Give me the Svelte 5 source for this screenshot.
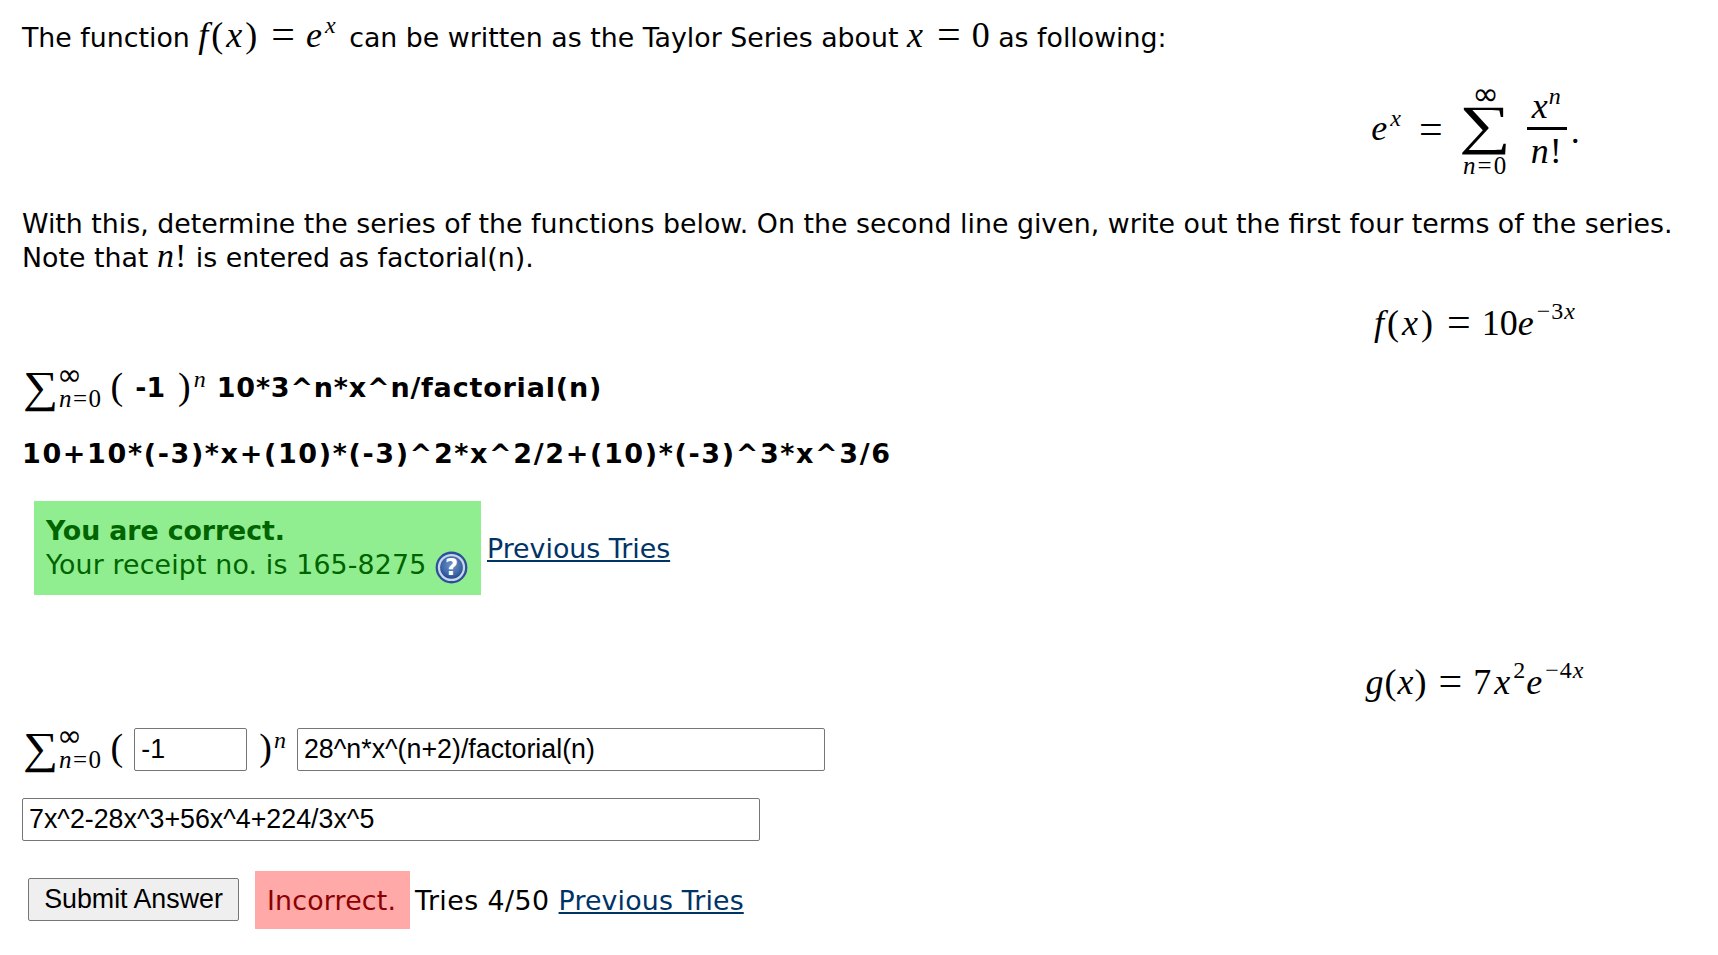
<script>
  let power = $state('-1');
  let expr = $state('28^n*x^(n+2)/factorial(n)');
  let terms = $state('7x^2-28x^3+56x^4+224/3x^5');
</script>

<main class="page">
  <p class="line first">
    The function <span class="math"><i>f</i>(<i>x</i>)<span class="rel">=</span><i>e</i><sup class="endsup"><i>x</i></sup></span> can be written as the Taylor Series about <span class="math"><i>x</i><span class="rel">=</span><span class="num-run">0</span></span> as following:
  </p>

  <div class="display d1">
    <span class="math flexmath">
      <span class="base"><i>e</i><sup><i>x</i></sup></span>
      <span class="rel eq">=</span>
      <span class="bigsum">
        <span class="lim">∞</span>
        <span class="sigma">∑</span>
        <span class="lim low"><i>n</i>=0</span>
      </span>
      <span class="frac">
        <span class="num"><i>x</i><sup><i>n</i></sup></span>
        <span class="den"><i>n</i>!</span>
      </span>
      <span class="dot">.</span>
    </span>
  </div>

  <p class="line second">
    With this, determine the series of the functions below. On the second line given, write out the first four terms of the series.<br />
    Note that <span class="math note"><i>n</i>!</span> is entered as factorial(n).
  </p>

  <div class="display d2">
    <span class="math"><i>f</i>(<i>x</i>)<span class="rel">=</span><span class="num-run">10</span><i>e</i><sup>−3<i>x</i></sup></span>
  </div>

  <div class="sumrow answered">
    <span class="sum"><span class="s">∑</span><span class="stack"><span class="up">∞</span><span class="dn"><i>n</i>=0</span></span></span>
    <span class="paren">(</span>
    <b class="val">-1</b>
    <span class="paren cl">)</span><span class="math supn"><i>n</i></span>
    <b class="val v2">10*3^n*x^n/factorial(n)</b>
  </div>

  <p class="boldline"><b>10+10*(-3)*x+(10)*(-3)^2*x^2/2+(10)*(-3)^3*x^3/6</b></p>

  <div class="status">
    <div class="correct">
      <b>You are correct.</b><br />
      <span class="receipt">Your receipt no. is 165-8275</span>
      <svg class="help" viewBox="0 0 32 32" aria-hidden="true">
        <defs>
          <radialGradient id="hg" cx="50%" cy="40%" r="60%">
            <stop offset="0" stop-color="#6f93c9" />
            <stop offset="0.7" stop-color="#3f68a8" />
            <stop offset="1" stop-color="#23468c" />
          </radialGradient>
        </defs>
        <circle cx="16" cy="16" r="15.4" fill="#2c4f97" />
        <circle cx="16" cy="16" r="13.2" fill="#c7d6ec" />
        <circle cx="16" cy="16" r="11" fill="url(#hg)" />
        <text x="16" y="23.5" text-anchor="middle" class="q">?</text>
      </svg>
    </div>
    <a href="#tries" class="link tries">Previous Tries</a>
  </div>

  <div class="display d3">
    <span class="math"><span class="tight"><i>g</i>(<i>x</i>)</span><span class="rel">=</span>7<i>x</i><sup>2</sup><i>e</i><sup>−4<i>x</i></sup></span>
  </div>

  <div class="sumrow inputs">
    <span class="sum"><span class="s">∑</span><span class="stack"><span class="up">∞</span><span class="dn"><i>n</i>=0</span></span></span>
    <span class="paren">(</span>
    <input class="field small" bind:value={power} />
    <span class="paren cl2">)</span><span class="math supn sn2"><i>n</i></span>
    <input class="field wide" bind:value={expr} />
  </div>

  <input class="field full" bind:value={terms} />

  <div class="submit">
    <button class="btn" type="button">Submit Answer</button>
    <span class="incorrect">Incorrect.</span>
    <span class="tries-count">Tries 4/50</span>
    <a href="#tries" class="link last">Previous Tries</a>
  </div>
</main>

<style>
  :global(body) {
    margin: 0;
    background: #fff;
    color: #000;
    font-family: "DejaVu Sans", Verdana, sans-serif;
  }
  .page {
    width: 1718px;
    height: 955px;
    overflow: hidden;
    box-sizing: border-box;
    padding: 21px 0 0 22px;
    font-size: 26.8px;
    line-height: 34px;
  }
  .line { margin: 0; }
  .math {
    font-family: "Liberation Serif", "Times New Roman", serif;
    font-size: 36px;
    letter-spacing: 3px;
    line-height: 0;
    white-space: nowrap;
  }
  .math sup {
    font-size: 24px;
    line-height: 0;
    vertical-align: 14px;
    letter-spacing: 1px;
  }
  .endsup { margin-right: 4px; }
  .note { font-size: 34px; letter-spacing: 1px; }
  .num-run { letter-spacing: 0; }
  .tight { letter-spacing: 1px; }
  .rel {
    font-size: 42px;
    letter-spacing: 0;
    margin: 0 11px;
    vertical-align: -1px;
  }
  .display {
    display: flex;
    justify-content: center;
    margin-left: 1210px;
    height: 40px;
    align-items: center;
  }
  .d2 .math sup, .d3 .math sup { vertical-align: 16px; }
  .flexmath { display: inline-flex; align-items: center; line-height: normal; }
  .d1 { height: 90px; margin-top: 31px; }
  .d1 .base { margin: -6px 17px 0 4px; }
  .d1 .rel.eq { margin: -4px 20px 0 0; }
  .bigsum {
    display: inline-flex;
    flex-direction: column;
    align-items: center;
    width: 46px;
    margin-right: 18px;
    letter-spacing: 0;
  }
  .lim { font-size: 24px; line-height: 16px; }
  .lim:first-child { font-family: "DejaVu Sans", sans-serif; font-size: 32px; }
  .sigma { font-size: 54px; line-height: 46px; display: inline-block; transform: scaleX(1.35); }
  .bigsum .low { line-height: 20px; margin-top: 8px; letter-spacing: 2px; font-size: 25px; }
  .frac {
    display: inline-flex;
    flex-direction: column;
    align-items: center;
    width: 40px;
    letter-spacing: 1px;
    margin-top: -3px;
  }
  .num { border-bottom: 3px solid #000; width: 100%; text-align: center; line-height: 36px; padding-bottom: 3px; }
  .den { line-height: 42px; }
  .dot { margin-left: 4px; line-height: 24px; }
  .second { margin-top: 31px; }
  .d2 { margin-top: 22px; }
  .sumrow {
    display: flex;
    align-items: center;
    height: 42px;
    white-space: nowrap;
  }
  .answered { margin-top: 30px; }
  .sum { display: inline-flex; align-items: center; font-family: "Liberation Serif", serif; margin-left: 1px; }
  .s { font-size: 44px; line-height: 42px; width: 36px; display: inline-block; transform: scaleX(1.12); transform-origin: left center; }
  .stack { display: inline-flex; flex-direction: column; }
  .up { font: 30px/17px "DejaVu Sans", sans-serif; margin-top: -2px; margin-left: -2px; }
  .dn { font-size: 25px; line-height: 20px; letter-spacing: 1.5px; margin-top: 6px; }
  .paren {
    font-family: "Liberation Serif", serif;
    font-size: 38px;
    font-weight: 400;
    margin-left: 8px;
    margin-top: -4px;
    line-height: 42px;
  }
  .cl { margin-left: 13px; }
  .cl2 { margin-left: 12px; }
  .supn { font-size: 24px; margin: -18px 0 0 3px; letter-spacing: 0; }
  .sn2 { margin-left: 2px; }
  .val { margin-left: 12px; }
  .v2 { margin-left: 11px; letter-spacing: 0.8px; font-size: 27px; }
  .boldline { margin: 28px 0 0; font-size: 27px; letter-spacing: 1.63px; }
  .status {
    display: flex;
    align-items: flex-start;
    margin: 30px 0 0 12px;
  }
  .correct {
    background: #90ee90;
    color: #006400;
    box-sizing: border-box;
    width: 447px;
    height: 94px;
    padding: 13px 12px 0;
    white-space: nowrap;
  }
  .correct b { letter-spacing: -0.1px; }
  .receipt { letter-spacing: 0.15px; }
  .help { width: 33px; height: 33px; vertical-align: -10px; }
  .q { font: 700 22px "DejaVu Sans", sans-serif; fill: #fff; }
  .link { color: #003366; text-decoration: underline; }
  .tries { margin: 31px 0 0 6px; }
  .d3 { margin-top: 61px; }
  .inputs { margin-top: 32px; }
  .field {
    font-family: "Liberation Sans", Arial, sans-serif;
    font-size: 26.8px;
    height: 43px;
    box-sizing: border-box;
    padding: 0 6px;
    border: 1px solid #767676;
    border-radius: 2px;
    background: #fff;
    color: #000;
    margin: 0;
    outline: none;
  }
  .small { width: 113px; margin-left: 11px; }
  .wide { width: 528px; margin-left: 11px; }
  .full { display: block; width: 738px; margin-top: 28px; }
  .submit {
    display: flex;
    align-items: center;
    height: 58px;
    margin-top: 30px;
  }
  .btn {
    font-family: "Liberation Sans", Arial, sans-serif;
    font-size: 26.8px;
    width: 211px;
    height: 43px;
    margin: -2px 16px 0 6px;
    padding: 0;
    background: #efefef;
    border: 1px solid #767676;
    border-radius: 2px;
    color: #000;
  }
  .incorrect {
    background: #ffa9a9;
    color: #8b0000;
    height: 58px;
    line-height: 60px;
    width: 155px;
    box-sizing: border-box;
    padding-left: 12px;
    letter-spacing: 0.2px;
  }
  .tries-count { margin-left: 5px; letter-spacing: 0.45px; padding-top: 2px; }
  .submit .link { padding-top: 2px; }
  .last { margin-left: 9px; letter-spacing: 0.15px; }
</style>
